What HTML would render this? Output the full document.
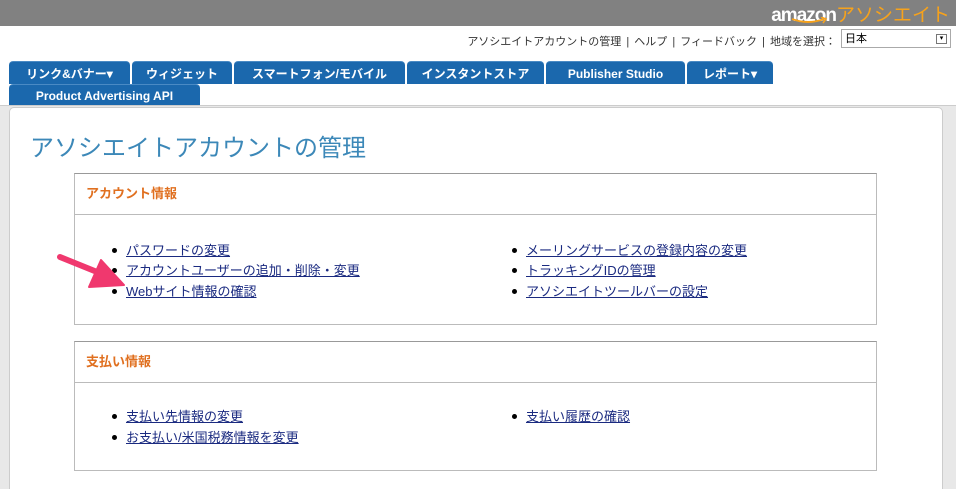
<!DOCTYPE html>
<html><head><meta charset="utf-8"><style>
html,body{margin:0;width:956px;height:489px;overflow:hidden}
body{background:#fff;font-family:"Liberation Sans","Noto Sans CJK JP",sans-serif;position:relative}
.top{position:absolute;left:0;top:0;width:956px;height:26px;background:#818181}
.logo{position:absolute;right:6px;top:0px;font-size:19px;font-weight:bold;color:#fff;letter-spacing:-1px}
.logo span{color:#f7a21b;font-weight:normal;letter-spacing:0}
.smile{position:absolute;left:790px;top:17px}
.links{position:absolute;right:120px;top:33px;font-size:11px;color:#333;word-spacing:2px}
.sel{position:absolute;left:841px;top:29px;width:110px;height:19px;border:1px solid #aaa;font-size:11px;line-height:18px;box-sizing:border-box;padding-left:3px}
.sel i{position:absolute;right:3px;top:4px;width:9px;height:8px;border:1px solid #777;font-size:7px;line-height:8px;text-align:center;font-style:normal}
.tab{position:absolute;height:23px;background:#1b68ad;border-radius:4px 4px 0 0;color:#fff;font-weight:bold;font-size:12px;text-align:center;line-height:25px;box-sizing:border-box;border-top:1px solid #4a8ac4}
.bg{position:absolute;left:0;top:105px;width:956px;height:384px;background:#e8e8e8;border-top:1px solid #ccc}
.panel{position:absolute;left:9px;top:107px;width:932px;height:400px;background:#fff;border:1px solid #ccc;border-radius:5px}
h1{position:absolute;left:30px;top:128px;margin:0;font-size:24px;font-weight:normal;color:#3c88b8}
.box{position:absolute;left:74px;width:801px;border:1px solid #bbb;border-top-color:#999}
.box .h{height:40px;border-bottom:1px solid #bbb;color:#e07020;font-weight:bold;font-size:13px;line-height:40px;padding-left:11px}
.item{position:absolute;font-size:13px;color:#1a2a80;text-decoration:underline}
.b{position:absolute;width:5px;height:5px;border-radius:50%;background:#000}
</style></head><body>
<div class="top"><div class="logo">amazon<span>アソシエイト</span></div></div>
<svg class="smile" width="40" height="8"><path d="M2 2 Q18 8 34 2" stroke="#f7a21b" stroke-width="2" fill="none"/><path d="M31 0 L36 2 L33 6" stroke="#f7a21b" stroke-width="1.5" fill="none"/></svg>
<div class="links">アソシエイトアカウントの管理 | ヘルプ | フィードバック | 地域を選択：</div>
<div class="sel">日本<i>▾</i></div>
<div class="tab" style="left:9px;top:61px;width:121px">リンク&amp;バナー▾</div>
<div class="tab" style="left:132px;top:61px;width:100px">ウィジェット</div>
<div class="tab" style="left:234px;top:61px;width:171px">スマートフォン/モバイル</div>
<div class="tab" style="left:407px;top:61px;width:137px">インスタントストア</div>
<div class="tab" style="left:546px;top:61px;width:139px">Publisher Studio</div>
<div class="tab" style="left:687px;top:61px;width:86px">レポート▾</div>
<div class="tab" style="left:9px;top:84px;width:191px;height:22px;line-height:22px">Product Advertising API</div>
<div class="bg"></div>
<div class="panel"></div>
<h1>アソシエイトアカウントの管理</h1>
<div class="box" style="top:173px;height:150px"><div class="h">アカウント情報</div></div>
<div class="box" style="top:341px;height:128px"><div class="h">支払い情報</div></div>
<div class="item" style="left:126px;top:240px">パスワードの変更</div>
<div class="item" style="left:126px;top:260px">アカウントユーザーの追加・削除・変更</div>
<div class="item" style="left:126px;top:281px">Webサイト情報の確認</div>
<div class="item" style="left:526px;top:240px">メーリングサービスの登録内容の変更</div>
<div class="item" style="left:526px;top:260px">トラッキングIDの管理</div>
<div class="item" style="left:526px;top:281px">アソシエイトツールバーの設定</div>
<div class="item" style="left:126px;top:406px">支払い先情報の変更</div>
<div class="item" style="left:126px;top:427px">お支払い/米国税務情報を変更</div>
<div class="item" style="left:526px;top:406px">支払い履歴の確認</div>
<div class="b" style="left:112px;top:248px"></div><div class="b" style="left:112px;top:268px"></div><div class="b" style="left:112px;top:289px"></div>
<div class="b" style="left:512px;top:248px"></div><div class="b" style="left:512px;top:268px"></div><div class="b" style="left:512px;top:289px"></div>
<div class="b" style="left:112px;top:414px"></div><div class="b" style="left:112px;top:435px"></div><div class="b" style="left:512px;top:414px"></div>
<svg style="position:absolute;left:55px;top:250px" width="70" height="45"><path d="M5 7 L52 26" stroke="#f0386e" stroke-width="6" stroke-linecap="round"/><path d="M46 10 L69 35 L34 37 Z" fill="#f0386e" stroke="#f0386e" stroke-width="2" stroke-linejoin="round"/></svg>
</body></html>
